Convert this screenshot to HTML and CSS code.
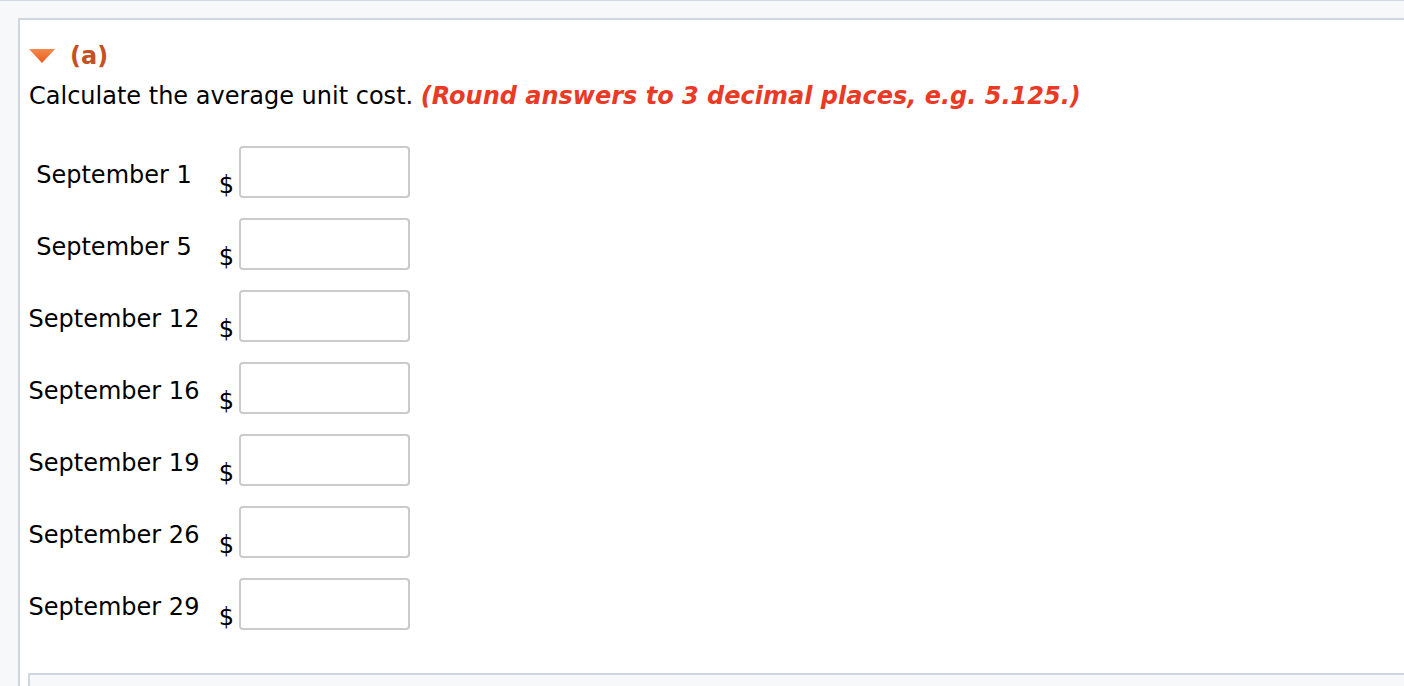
FILE: index.html
```html
<!DOCTYPE html>
<html>
<head>
<meta charset="utf-8">
<link rel="stylesheet" href="styles.css">
</head>
<body>
<div class="topstrip"></div>
<div class="panel">
  <div class="part-head">
    <svg class="tri" width="26" height="14" viewBox="0 0 26 14">
      <defs>
        <linearGradient id="g" x1="0" y1="0" x2="0" y2="1">
          <stop offset="0" stop-color="#f58a4a"/>
          <stop offset="1" stop-color="#e85a1e"/>
        </linearGradient>
      </defs>
      <polygon points="0,0 26,0 13,14" fill="url(#g)"/>
    </svg>
    <span class="part-label">(a)</span>
  </div>
  <p class="question">Calculate the average unit cost. <span class="hint">(Round answers to 3 decimal places, e.g. 5.125.)</span></p>
  <div class="rows">
    <div class="label">September 1</div><div class="cur">$</div><div class="field"></div>
    <div class="label">September 5</div><div class="cur">$</div><div class="field"></div>
    <div class="label">September 12</div><div class="cur">$</div><div class="field"></div>
    <div class="label">September 16</div><div class="cur">$</div><div class="field"></div>
    <div class="label">September 19</div><div class="cur">$</div><div class="field"></div>
    <div class="label">September 26</div><div class="cur">$</div><div class="field"></div>
    <div class="label">September 29</div><div class="cur">$</div><div class="field"></div>
  </div>
  <div class="bottombox"></div>
</div>
</body>
</html>
```

FILE: styles.css
```css
html, body {
  margin: 0;
  padding: 0;
  background: #f6f8fa;
  height: 686px;
  overflow: hidden;
  font-family: "DejaVu Sans", Verdana, sans-serif;
  color: #000;
}
.topstrip {
  height: 17px;
  border-top: 1px solid #d3d9e1;
  background: #f6f8fa;
}
.panel {
  margin-left: 18px;
  border-left: 2px solid #cfd6e0;
  border-top: 2px solid #cfd6e0;
  background: #fff;
  height: 700px;
  padding-top: 22px;
  box-sizing: border-box;
}
.part-head {
  display: flex;
  align-items: center;
  gap: 15px;
  padding-left: 9px;
  height: 28px;
}
.tri {
  display: block;
}
.part-label {
  color: #c4511f;
  font-weight: bold;
  font-size: 24px;
  line-height: 28px;
}
.question {
  margin: 12px 0 0 9px;
  font-size: 24px;
  line-height: 28px;
}
.hint {
  color: #ea3a26;
  font-weight: bold;
  font-style: italic;
}
.rows {
  margin-top: 36px;
  margin-left: 8px;
  display: grid;
  grid-template-columns: 172px 39px 171px;
  grid-auto-rows: 52px;
  row-gap: 20px;
}
.label {
  font-size: 24px;
  line-height: 28px;
  text-align: center;
  align-self: center;
  margin-top: 6px;
}
.cur {
  font-size: 24px;
  line-height: 28px;
  align-self: end;
  text-align: right;
  padding-right: 5px;
  margin-bottom: -1px;
}
.field {
  border: 2px solid #cbcbcb;
  border-radius: 4px;
  box-sizing: border-box;
  background: #fff;
}
.bottombox {
  margin-top: 43px;
  margin-left: 8px;
  height: 40px;
  border: 2px solid #cfd6e0;
  border-right: none;
  background: #f6f8fa;
}
```
